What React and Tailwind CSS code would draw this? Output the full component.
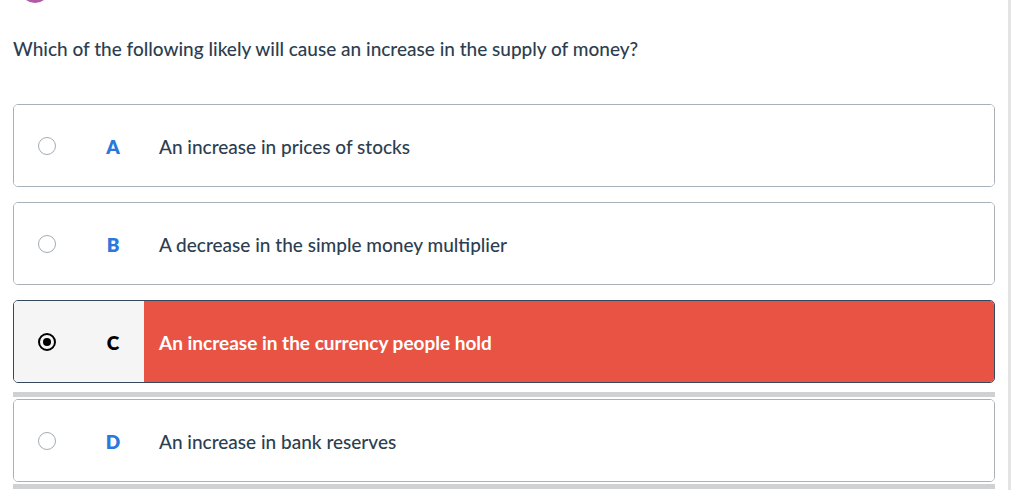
import React from "react";

const options = [
  { letter: "A", text: "An increase in prices of stocks" },
  { letter: "B", text: "A decrease in the simple money multiplier" },
  { letter: "C", text: "An increase in the currency people hold", selected: true },
  { letter: "D", text: "An increase in bank reserves", banded: true },
];

function Radio({ checked }) {
  if (checked) {
    return (
      <span className="flex h-[18px] w-[18px] items-center justify-center rounded-full border-2 border-black">
        <span className="h-[8px] w-[8px] rounded-full bg-black" />
      </span>
    );
  }
  return <span className="block h-[18px] w-[18px] rounded-full border-[1.5px] border-[#a3acb5] bg-white" />;
}

function OptionCard({ option }) {
  const selected = option.selected;
  return (
    <div
      className={`flex h-[83px] overflow-hidden rounded-[5px] border ${
        selected ? "border-[#34495e]" : "border-[#a8b1ba]"
      }`}
    >
      {/* radio + letter */}
      <div className={`flex w-[130px] shrink-0 items-center ${selected ? "bg-[#f5f5f5]" : "bg-white"}`}>
        <div className="ml-[24px] pt-[1px]">
          <Radio checked={selected} />
        </div>
        <span
          className={`ml-[48px] w-[18px] pt-[3px] text-center text-[19px] font-extrabold ${
            selected ? "text-black" : "text-[#2b78dc]"
          }`}
        >
          {option.letter}
        </span>
      </div>
      {/* answer text */}
      <div
        className={`flex flex-1 items-center pl-[15px] pt-[3px] text-[19px] ${
          selected ? "bg-[#e85343] font-bold text-white" : "bg-white font-medium text-[#2c3e50]"
        }`}
      >
        {option.text}
      </div>
    </div>
  );
}

export default function App() {
  return (
    <div className="h-[490px] w-[1024px] overflow-hidden bg-white" style={{ fontFamily: '"Lato", "Open Sans", sans-serif' }}>
      <div className="relative h-full w-[1011px] border-r-[3px] border-[#e4e4e4]">
        {/* avatar peeking from above */}
        <div className="absolute left-[20px] top-[-27px] h-[30px] w-[30px] rounded-full bg-[#b25aa8]" />

        <div className="px-[13px]">
          <p className="pt-[37px] text-[19px] font-medium leading-[24px] text-[#2c3e50]">
            Which of the following likely will cause an increase in the supply of money?
          </p>

          <div className="mt-[43px] flex flex-col">
            {options.map((o, i) =>
              o.banded ? (
                <div key={o.letter} className="mt-[9px] border-t-[5px] border-b-[5px] border-[#cfd1d3] pt-[2px] pb-[2px]">
                  <OptionCard option={o} />
                </div>
              ) : (
                <div key={o.letter} className={i > 0 ? "mt-[15px]" : ""}>
                  <OptionCard option={o} />
                </div>
              )
            )}
          </div>
        </div>
      </div>
    </div>
  );
}
